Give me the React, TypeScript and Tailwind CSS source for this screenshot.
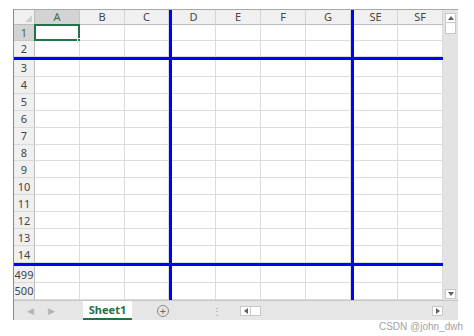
import React from "react";

// column layout: widths in px, "sep" marks a blue split line
type Col = { key: string; w: string } | { key: "sep" };

const cols: Col[] = [
    { key: "A", w: "w-[45px]" },
    { key: "B", w: "w-[45px]" },
    { key: "C", w: "w-[44px]" },
    { key: "sep" },
    { key: "D", w: "w-[44px]" },
    { key: "E", w: "w-[45px]" },
    { key: "F", w: "w-[45px]" },
    { key: "G", w: "w-[45px]" },
    { key: "sep" },
    { key: "SE", w: "w-[44px]" },
    { key: "SF", w: "w-[45px]" },
];

const midRows = ["3", "4", "5", "6", "7", "8", "9", "10", "11", "12", "13", "14"];

function BlueV() {
    return <div className="w-[3px] shrink-0 self-stretch bg-[#0000ff]" />;
}

function BlueH() {
    return <div className="h-[3px] w-full bg-[#0000ff]" />;
}

function HeaderRow() {
    return (
        <div className="flex h-[15px]">
            <div className="relative w-[21px] shrink-0 bg-[#f0f0f0] border-r border-b border-[#bdbdbd]">
                <div className="absolute right-[2px] bottom-[2px] w-0 h-0 border-l-[7px] border-l-transparent border-b-[7px] border-b-[#d0d0d0]" />
            </div>
            {cols.map((c, i) =>
                c.key === "sep" ? (
                    <BlueV key={i} />
                ) : (
                    <div
                        key={i}
                        className={`${c.w} shrink-0 flex items-center justify-center border-r border-b text-[11px] leading-none ${
                            c.key === "A"
                                ? "bg-[#d3d3d3] border-r-[#c6c6c6] border-b-[#217346] text-[#3d6b4f]"
                                : "bg-[#f0f0f0] border-r-[#d4d4d4] border-b-[#bdbdbd] text-[#444]"
                        }`}
                    >
                        {c.key}
                    </div>
                )
            )}
        </div>
    );
}

function Row({ label, h, selected }: { label: string; h: string; selected?: boolean }) {
    return (
        <div className={`flex ${h}`}>
            <div
                className={`w-[21px] shrink-0 flex items-center justify-center border-r border-b text-[11px] leading-none ${
                    selected
                        ? "bg-[#d3d3d3] border-r-[#217346] border-b-[#c6c6c6] text-[#3d6b4f]"
                        : "bg-[#f0f0f0] border-r-[#bdbdbd] border-b-[#d9d9d9] text-[#444]"
                }`}
            >
                {label}
            </div>
            {cols.map((c, i) =>
                c.key === "sep" ? (
                    <BlueV key={i} />
                ) : (
                    <div key={i} className={`${c.w} shrink-0 relative border-r border-b border-[#dcdcdc] bg-white`}>
                        {selected && c.key === "A" && (
                            <>
                                <div className="absolute -left-px -top-px -right-px -bottom-px border-2 border-[#217346]" />
                                <div className="absolute -right-[3px] -bottom-[3px] w-[5px] h-[5px] bg-[#217346] border border-white" />
                            </>
                        )}
                    </div>
                )
            )}
        </div>
    );
}

function ArrowBtn({ dir }: { dir: "up" | "down" | "left" | "right" }) {
    const tri =
        dir === "up"
            ? "border-l-[3px] border-r-[3px] border-b-[4px] border-l-transparent border-r-transparent border-b-[#606060]"
            : dir === "down"
            ? "border-l-[3px] border-r-[3px] border-t-[4px] border-l-transparent border-r-transparent border-t-[#606060]"
            : dir === "left"
            ? "border-t-[3px] border-b-[3px] border-r-[4px] border-t-transparent border-b-transparent border-r-[#606060]"
            : "border-t-[3px] border-b-[3px] border-l-[4px] border-t-transparent border-b-transparent border-l-[#606060]";
    return (
        <div className="w-[11px] h-[10px] shrink-0 flex items-center justify-center bg-white border border-[#c8c8c8]">
            <div className={`w-0 h-0 ${tri}`} />
        </div>
    );
}

export default function App() {
    return (
        <div className="w-[474px] h-[336px] bg-white font-['Noto_Sans','Open_Sans',sans-serif] overflow-hidden">
            <div className="pt-[9px] pl-[13px]">
                <div className="w-[445px] flex flex-col border-l border-l-[#8a8a8a]">
                    {/* sheet + vertical scrollbar */}
                    <div className="flex h-[291px] border-t border-[#a8a8a8]">
                        <div className="w-[429px] flex flex-col">
                            <HeaderRow />
                            <Row label="1" h="h-[16px]" selected />
                            <Row label="2" h="h-[16px]" />
                            <BlueH />
                            {midRows.map((r) => (
                                <Row key={r} label={r} h="h-[17px]" />
                            ))}
                            <BlueH />
                            <Row label="499" h="h-[17px]" />
                            <Row label="500" h="h-[17px]" />
                        </div>
                        <div className="w-[15px] flex flex-col items-center bg-[#e3e3e3] pt-[3px] pb-[1px]">
                            <ArrowBtn dir="up" />
                            <div className="w-[11px] h-[11px] bg-white border-x border-b border-[#c8c8c8]" />
                            <div className="flex-1" />
                            <ArrowBtn dir="down" />
                        </div>
                    </div>
                    {/* tab bar */}
                    <div className="flex h-[20px] bg-[#e6e6e6] border-t border-[#c6c6c6] text-[#b4b4b4]">
                        <div className="w-[69px] flex items-center gap-[14px] pl-[13px] text-[9px]">
                            <span>◀</span>
                            <span>▶</span>
                        </div>
                        <div className="w-[49px] bg-white border-b-2 border-[#217346] flex items-center justify-center text-[11px] font-bold text-[#217346] leading-none">
                            Sheet1
                        </div>
                        <div className="w-[62px] flex items-center justify-center">
                            <div className="w-[12px] h-[12px] rounded-full border border-[#8a8a8a] flex items-center justify-center text-[#6a6a6a] text-[11px] leading-none">
                                +
                            </div>
                        </div>
                        <div className="w-[46px] flex items-center justify-center text-[#9a9a9a] text-[10px] leading-none">⋮</div>
                        <div className="w-[203px] flex items-center">
                            <ArrowBtn dir="left" />
                            <div className="w-[10px] h-[10px] bg-white border-y border-r border-[#c8c8c8]" />
                            <div className="flex-1" />
                            <ArrowBtn dir="right" />
                        </div>
                        <div className="w-[15px] bg-[#e3e3e3]" />
                    </div>
                </div>
            </div>
            <div className="pr-[11px] text-right text-[10px] leading-[14px] text-[#a3a3a3] font-['Liberation_Sans',sans-serif]">
                CSDN @john_dwh
            </div>
        </div>
    );
}
